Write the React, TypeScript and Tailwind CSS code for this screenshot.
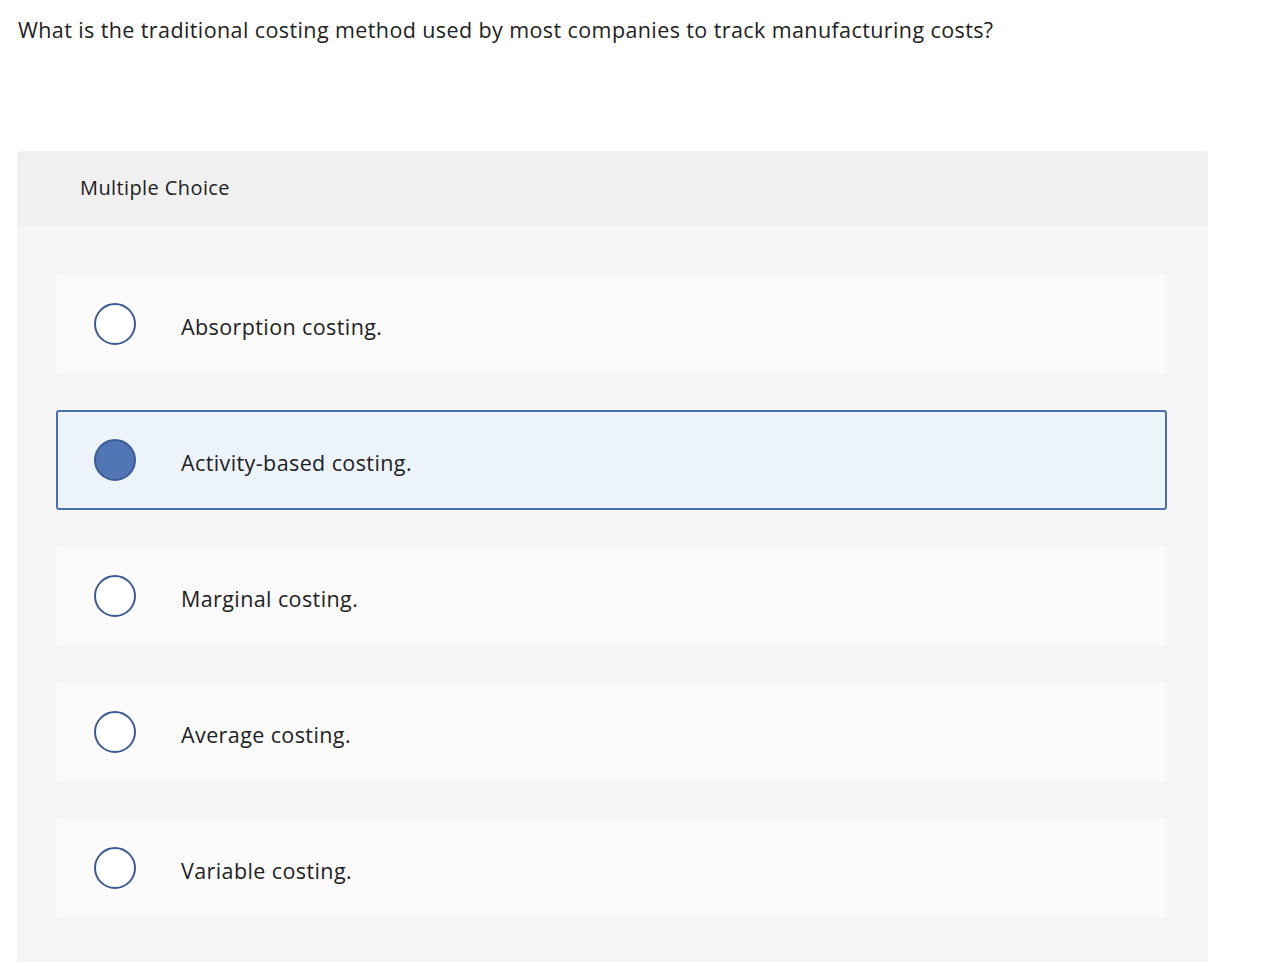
const options = [
  { label: 'Absorption costing.', selected: false },
  { label: 'Activity-based costing.', selected: true },
  { label: 'Marginal costing.', selected: false },
  { label: 'Average costing.', selected: false },
  { label: 'Variable costing.', selected: false },
];

function Radio({ selected }: { selected: boolean }) {
  return selected ? (
    <span className="block h-[42px] w-[42px] shrink-0 rounded-full border-2 border-[#3d5d97] bg-[#5275b5]" />
  ) : (
    <span className="block h-[42px] w-[42px] shrink-0 rounded-full border-2 border-[#3b5a94] bg-white" />
  );
}

export default function App() {
  return (
    <div
      className="min-h-screen bg-white pl-[17px] tracking-[0.4px] text-[#222]"
      style={{ fontFamily: '"Open Sans", Lato, sans-serif' }}
    >
      {/* Question */}
      <p className="pl-px pt-[15px] text-[21.5px] leading-[30px]">
        What is the traditional costing method used by most companies to track manufacturing costs?
      </p>

      {/* Multiple choice panel */}
      <div className="mt-[106px] w-[1191px] overflow-hidden rounded-t-[4px] bg-[#f5f5f5]">
        <div className="flex h-[74px] items-center bg-[#f0f0f0] pl-[63px] text-[20px]">
          Multiple Choice
        </div>
        <div className="flex flex-col gap-[36px] pb-[44px] pl-[39px] pt-[49px]">
          {options.map((o) =>
            o.selected ? (
              <div
                key={o.label}
                className="flex h-[100px] w-[1111px] items-center rounded-[3px] border-2 border-[#4a6fb0] bg-[#ecf3fb] pl-[36px]"
              >
                <Radio selected />
                <span className="ml-[45px] pt-[7px] text-[21.5px]">{o.label}</span>
              </div>
            ) : (
              <div
                key={o.label}
                className="flex h-[100px] w-[1111px] items-center rounded-[4px] bg-[#fafafa] pl-[38px]"
              >
                <Radio selected={false} />
                <span className="ml-[45px] pt-[7px] text-[21.5px]">{o.label}</span>
              </div>
            )
          )}
        </div>
      </div>
    </div>
  );
}
